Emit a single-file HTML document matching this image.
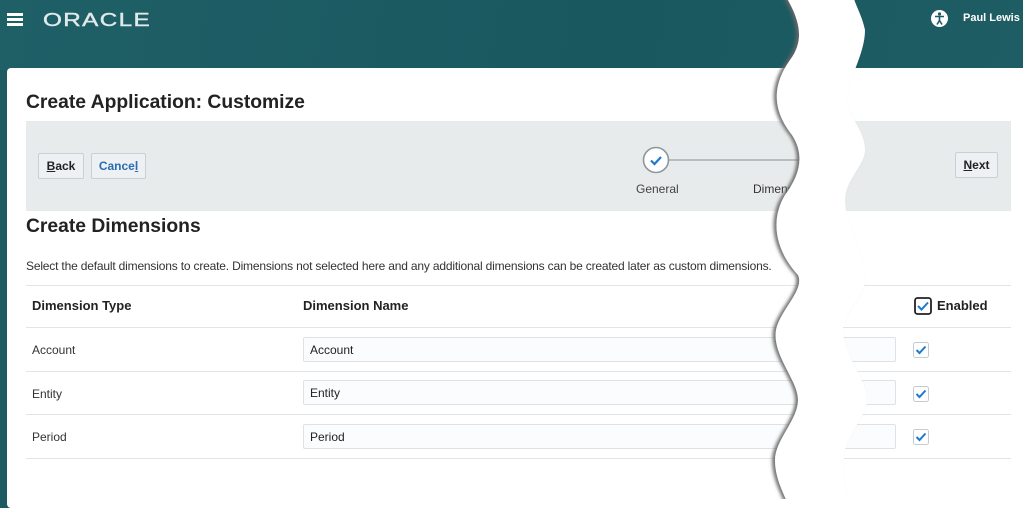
<!DOCTYPE html>
<html><head><style>
body{margin:0;width:1023px;height:499px;overflow:hidden;font-family:"Liberation Sans",sans-serif;background:#1d5a61;position:relative}
.hdr{position:absolute;left:0;top:0;width:1023px;height:70px;background:linear-gradient(100deg,#1f5f66,#1a5860 60%,#1e5d64)}
.card{position:absolute;left:7px;top:68px;width:1030px;height:440px;background:#fff;border-radius:4px}
.a{position:absolute;white-space:nowrap}
.btn{position:absolute;height:24px;border:1px solid #c9d0d4;background:#eef1f3;border-radius:2px;font-size:12px;font-weight:bold;line-height:24px;text-align:center}
.line{position:absolute;left:26px;width:985px;height:1px;background:#e1e5e8}
.inp{position:absolute;left:303px;width:593px;height:25px;border:1px solid #dde2e6;background:#fbfcfd;border-radius:2px;font-size:12px;line-height:25px;padding-left:6px;box-sizing:border-box;color:#222}
.td{font-size:12px;color:#333}
</style></head><body>
<div class="hdr"></div>
<div class="a" style="left:7px;top:13px;width:16px;height:3px;background:#fff;box-shadow:0 5px 0 #fff,0 10px 0 #fff"></div>
<div class="a" style="left:43px;top:10px;color:#e0eaea;font-size:18px;letter-spacing:1px;transform:scaleX(1.35);transform-origin:left;-webkit-text-stroke:0.4px #e0eaea">ORACLE</div>
<svg class="a" style="left:931px;top:10px" width="17" height="17"><circle cx="8.5" cy="8.5" r="8.5" fill="#fff"/><circle cx="8.5" cy="4" r="1.6" fill="#1d5a61"/><path d="M4 6.5h9M8.5 6.5v4M8.5 10.5l-2.5 4M8.5 10.5l2.5 4" stroke="#1d5a61" stroke-width="1.6" fill="none"/></svg>
<div class="a" style="left:963px;top:12px;color:#fff;font-size:11px;font-weight:bold">Paul Lewis</div>
<div class="card"></div>
<div class="a" style="left:26px;top:92px;font-size:19.3px;font-weight:bold;color:#222">Create Application: Customize</div>
<div class="a" style="left:26px;top:121px;width:985px;height:90px;background:#e8ebec"></div>
<div class="btn" style="left:38px;top:153px;width:44px;color:#222"><u>B</u>ack</div>
<div class="btn" style="left:91px;top:153px;width:53px;color:#2b6cb0">Cance<u>l</u></div>
<div class="btn" style="left:955px;top:152px;width:41px;color:#222"><u>N</u>ext</div>
<div class="a" style="left:668px;top:159px;width:140px;height:2px;background:#b5bec4"></div>
<svg class="a" style="left:642px;top:146px" width="28" height="28"><circle cx="14" cy="14" r="12.5" fill="#fff" stroke="#8e979c" stroke-width="1.6"/><path d="M9 14.5l3.5 3.5 6.5-7" stroke="#1e7ad0" stroke-width="2.2" fill="none"/></svg>
<div class="a" style="left:636px;top:182px;font-size:12px;color:#444">General</div>
<div class="a" style="left:753px;top:182px;font-size:12px;color:#333">Dimensions</div>
<div class="a" style="left:26px;top:216px;font-size:19.3px;font-weight:bold;color:#222">Create Dimensions</div>
<div class="a" style="left:26px;top:259px;font-size:12px;color:#333;letter-spacing:-0.18px">Select the default dimensions to create. Dimensions not selected here and any additional dimensions can be created later as custom dimensions.</div>
<div class="line" style="top:285px"></div>
<div class="a" style="left:32px;top:298px;font-size:13px;font-weight:bold;color:#222">Dimension Type</div>
<div class="a" style="left:303px;top:298px;font-size:13px;font-weight:bold;color:#222">Dimension Name</div>
<svg class="a" style="left:914px;top:297px" width="18" height="18"><rect x="1" y="1" width="16" height="16" rx="2.5" fill="#fff" stroke="#222" stroke-width="1.8"/><path d="M4 9l3.5 3.5 6.5-7" stroke="#1e7ad0" stroke-width="2" fill="none"/></svg>
<div class="a" style="left:937px;top:298px;font-size:13px;font-weight:bold;color:#222">Enabled</div>
<div class="line" style="top:327px"></div>
<div class="a td" style="left:32px;top:343px">Account</div><div class="inp" style="top:337px">Account</div>
<div class="line" style="top:371px"></div>
<div class="a td" style="left:32px;top:387px">Entity</div><div class="inp" style="top:380px">Entity</div>
<div class="line" style="top:414px"></div>
<div class="a td" style="left:32px;top:430px">Period</div><div class="inp" style="top:424px">Period</div>
<div class="line" style="top:458px"></div>
<svg class="a" style="left:913px;top:342px" width="16" height="16"><rect x="0.5" y="0.5" width="15" height="15" rx="2" fill="#fff" stroke="#c5ccd1"/><path d="M3.5 8l3 3 6-6.5" stroke="#1e7ad0" stroke-width="2" fill="none"/></svg>
<svg class="a" style="left:913px;top:386px" width="16" height="16"><rect x="0.5" y="0.5" width="15" height="15" rx="2" fill="#fff" stroke="#c5ccd1"/><path d="M3.5 8l3 3 6-6.5" stroke="#1e7ad0" stroke-width="2" fill="none"/></svg>
<svg class="a" style="left:913px;top:429px" width="16" height="16"><rect x="0.5" y="0.5" width="15" height="15" rx="2" fill="#fff" stroke="#c5ccd1"/><path d="M3.5 8l3 3 6-6.5" stroke="#1e7ad0" stroke-width="2" fill="none"/></svg>
<svg class="a" style="left:0;top:0" width="1023" height="499">
<defs><filter id="s" x="-20%" y="-5%" width="140%" height="110%"><feDropShadow dx="-3" dy="0" stdDeviation="1.5" flood-color="#666" flood-opacity="0.9"/></filter></defs>
<path filter="url(#s)" fill="#fff" d="M785 -5 C800 20 805 40 790 60 C772 85 772 110 792 135 C805 155 800 175 785 195 C770 220 775 250 798 275 C805 290 780 310 776 330 C772 355 798 380 798 400 C798 420 775 440 775 460 C775 480 785 495 788 505 L848 505 C845 490 842 470 845 450 C850 430 867 415 867 400 C867 380 843 355 843 330 C845 310 865 295 865 280 C865 255 845 225 845 200 C845 180 865 165 865 150 C865 130 847 115 847 100 C847 80 865 55 865 30 C862 15 855 5 853 -5 Z"/>
</svg>
</body></html>
